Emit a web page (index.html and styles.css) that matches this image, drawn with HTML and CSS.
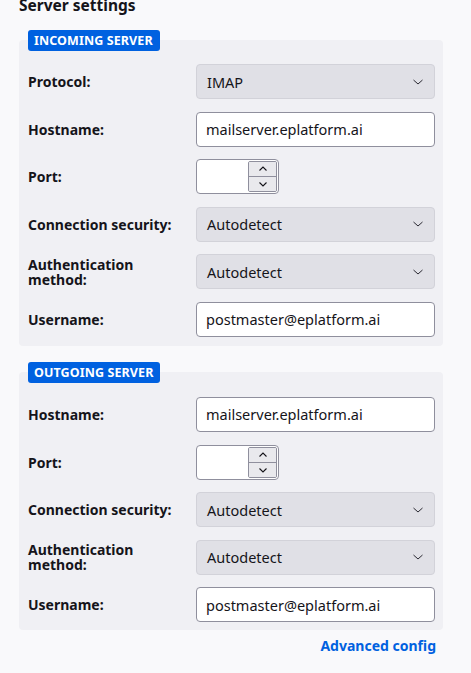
FILE: index.html
```html
<!DOCTYPE html>
<html lang="en">
<head>
<meta charset="utf-8">
<title>Server settings</title>
<link rel="stylesheet" href="styles.css">
</head>
<body>
<div class="page">
  <h2 class="title">Server settings</h2>

  <section class="group">
    <span class="badge">INCOMING SERVER</span>
    <div class="panel">
      <div class="row">
        <label class="lbl">Protocol:</label>
        <div class="select"><span>IMAP</span><svg class="chev" viewBox="0 0 12 12"><path d="M1.5 4 L6 8 L10.5 4"/></svg></div>
      </div>
      <div class="row">
        <label class="lbl">Hostname:</label>
        <div class="input">mailserver.eplatform.ai</div>
      </div>
      <div class="row">
        <label class="lbl">Port:</label>
        <div class="number"><span class="num-field"></span><span class="spin"><span class="sb"><svg viewBox="0 0 12 12"><path d="M2.5 7.5 L6 4 L9.5 7.5"/></svg></span><span class="sb"><svg viewBox="0 0 12 12"><path d="M2.5 4.5 L6 8 L9.5 4.5"/></svg></span></span></div>
      </div>
      <div class="row">
        <label class="lbl">Connection security:</label>
        <div class="select"><span>Autodetect</span><svg class="chev" viewBox="0 0 12 12"><path d="M1.5 4 L6 8 L10.5 4"/></svg></div>
      </div>
      <div class="row">
        <label class="lbl">Authentication method:</label>
        <div class="select"><span>Autodetect</span><svg class="chev" viewBox="0 0 12 12"><path d="M1.5 4 L6 8 L10.5 4"/></svg></div>
      </div>
      <div class="row">
        <label class="lbl">Username:</label>
        <div class="input">postmaster@eplatform.ai</div>
      </div>
    </div>
  </section>

  <section class="group group2">
    <span class="badge">OUTGOING SERVER</span>
    <div class="panel">
      <div class="row">
        <label class="lbl">Hostname:</label>
        <div class="input">mailserver.eplatform.ai</div>
      </div>
      <div class="row">
        <label class="lbl">Port:</label>
        <div class="number"><span class="num-field"></span><span class="spin"><span class="sb"><svg viewBox="0 0 12 12"><path d="M2.5 7.5 L6 4 L9.5 7.5"/></svg></span><span class="sb"><svg viewBox="0 0 12 12"><path d="M2.5 4.5 L6 8 L9.5 4.5"/></svg></span></span></div>
      </div>
      <div class="row">
        <label class="lbl">Connection security:</label>
        <div class="select"><span>Autodetect</span><svg class="chev" viewBox="0 0 12 12"><path d="M1.5 4 L6 8 L10.5 4"/></svg></div>
      </div>
      <div class="row">
        <label class="lbl">Authentication method:</label>
        <div class="select"><span>Autodetect</span><svg class="chev" viewBox="0 0 12 12"><path d="M1.5 4 L6 8 L10.5 4"/></svg></div>
      </div>
      <div class="row">
        <label class="lbl">Username:</label>
        <div class="input">postmaster@eplatform.ai</div>
      </div>
    </div>
  </section>

  <div class="links"><a class="adv" href="#">Advanced config</a></div>
</div>
</body>
</html>
```

FILE: styles.css
```css
html, body {
  margin: 0;
  padding: 0;
  background: #f9f9fb;
}
body {
  font-family: "Noto Sans", "Open Sans", sans-serif;
  color: #15141a;
}
.page {
  width: 424px;
  padding-left: 19px;
}
.title {
  margin: -6px 0 0 0;
  font-size: 15.5px;
  font-weight: 700;
  line-height: 22px;
}
.group {
  margin-top: 12px;
}
.group2 {
  margin-top: 14px;
}
.badge {
  display: inline-block;
  position: relative;
  z-index: 1;
  margin-left: 9px;
  height: 21px;
  line-height: 21px;
  padding: 0 7px 0 6px;
  background: #0061e0;
  color: #fff;
  font-size: 12.5px;
  font-weight: 700;
  border-radius: 3px;
  letter-spacing: 0.1px;
}
.panel {
  margin-top: -11px;
  background: #f0f0f4;
  border-radius: 4px;
  padding: 24px 8px 9px 9px;
  display: flex;
  flex-direction: column;
  gap: 12.6px;
}
.group2 .panel {
  padding-top: 25px;
  padding-bottom: 8px;
}
.row {
  display: grid;
  grid-template-columns: 168px 239px;
  align-items: center;
  min-height: 35px;
}
.lbl {
  font-size: 14px;
  font-weight: 700;
  line-height: 15px;
  max-width: 156px;
}
.select, .input {
  box-sizing: border-box;
  height: 35px;
  border-radius: 4px;
  display: flex;
  align-items: center;
  font-size: 14.5px;
  padding-left: 10px;
}
.select {
  background: #e0e0e6;
  border: 1px solid #d2d2d9;
  justify-content: space-between;
  padding-right: 10px;
}
.input {
  background: #fff;
  border: 1px solid #8f8f9d;
  padding-left: 9px;
}
.chev {
  width: 12px;
  height: 12px;
  fill: none;
  stroke: #2b2a33;
  stroke-width: 1;
}
.number {
  box-sizing: border-box;
  width: 83px;
  height: 35px;
  border: 1px solid #8f8f9d;
  border-radius: 4px;
  background: #fff;
  display: flex;
  align-items: stretch;
  padding: 1px 1px 1px 0;
}
.num-field {
  flex: 1;
}
.spin {
  width: 27px;
  display: flex;
  flex-direction: column;
  border: 1px solid #8f8f9d;
  border-radius: 2px;
  overflow: hidden;
}
.sb {
  flex: 1;
  background: #e9e9ed;
  display: flex;
  align-items: center;
  justify-content: center;
}
.sb + .sb {
  border-top: 1px solid #8f8f9d;
}
.sb svg {
  width: 12px;
  height: 12px;
  fill: none;
  stroke: #15141a;
  stroke-width: 1.1;
}
.links {
  display: flex;
  justify-content: flex-end;
  padding-right: 7px;
  margin-top: 6px;
}
.adv {
  color: #0061e0;
  font-weight: 700;
  font-size: 14px;
  text-decoration: none;
}
```
